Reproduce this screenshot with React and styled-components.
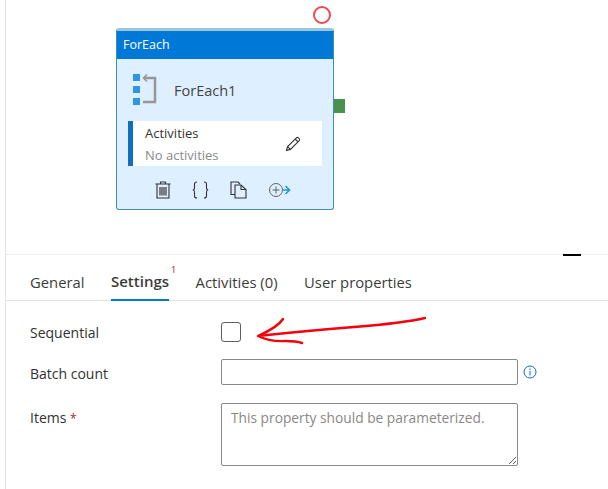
import React from 'react';
import styled, { createGlobalStyle } from 'styled-components';

const GlobalStyle = createGlobalStyle`
  html, body {
    margin: 0;
    padding: 0;
    background: #fff;
  }
  body {
    font-family: "Open Sans", "Noto Sans", "Liberation Sans", sans-serif;
    color: #323130;
  }
`;

const Page = styled.div`
  position: relative;
  width: 603px;
  height: 489px;
  overflow: hidden;
  box-sizing: border-box;
  margin-left: 5px;
  border-left: 1px solid #e3e3e3;
`;

const Canvas = styled.div`
  position: relative;
  height: 254px;
  border-bottom: 1px solid #ececec;
`;

const Node = styled.div`
  position: absolute;
  left: 110px;
  top: 28px;
  width: 218px;
  height: 182px;
  box-sizing: border-box;
  display: flex;
  flex-direction: column;
  background: #deefff;
  border: 1px solid #3f8fb5;
  border-top: 3px solid #9cc6d8;
  border-radius: 3px;
`;

const NodeHeader = styled.div`
  height: 28px;
  flex: none;
  background: #0078d7;
  color: #fff;
  font-size: 12.5px;
  line-height: 28px;
  padding-left: 6px;
`;

const NodeTitleRow = styled.div`
  display: flex;
  align-items: center;
  gap: 17px;
  height: 62px;
  padding-left: 16px;
  font-size: 14.5px;
  color: #444;
`;

const ActivityBox = styled.div`
  display: flex;
  align-items: center;
  justify-content: space-between;
  height: 45px;
  margin: 0 11px;
  padding: 0 21px 0 12px;
  background: #fff;
  border-left: 5px solid #106ebe;
`;

const ActivityText = styled.div`
  padding-top: 1px;
  font-size: 13px;
  line-height: 22px;
`;

const ActivityTitle = styled.div`
  color: #333;
`;

const ActivityHint = styled.div`
  color: #8a8a8a;
`;

const NodeActions = styled.div`
  display: flex;
  align-items: center;
  gap: 21px;
  padding: 15px 0 0 38px;
`;

const Port = styled.div`
  position: absolute;
  left: 328px;
  top: 99px;
  width: 11px;
  height: 14px;
  background: #4a9150;
`;

const Ring = styled.div`
  position: absolute;
  left: 307px;
  top: 6px;
  width: 14px;
  height: 14px;
  border: 2px solid #f0484e;
  border-radius: 50%;
`;

const Marker = styled.div`
  position: absolute;
  left: 557px;
  top: 254px;
  width: 18px;
  height: 2px;
  background: #000;
`;

const TabBar = styled.div`
  display: flex;
  gap: 26.5px;
  height: 46px;
  box-sizing: border-box;
  padding-left: 24px;
  border-bottom: 1px solid #e1e1e1;
`;

const Tab = styled.div`
  position: relative;
  display: flex;
  align-items: center;
  height: 46px;
  padding-top: 8px;
  box-sizing: border-box;
  font-size: ${p => (p.$active ? '15px' : '14.8px')};
  font-weight: ${p => (p.$active ? 600 : 400)};
  color: #3d3c3b;
  border-bottom: ${p => (p.$active ? '2px solid #0078d4' : 'none')};
`;

const TabBadge = styled.span`
  position: absolute;
  right: -7px;
  top: 8px;
  font-size: 9px;
  font-weight: 400;
  color: #a4262c;
`;

const Form = styled.div`
  display: flex;
  flex-direction: column;
  padding: 21px 0 0 24px;
`;

const Row = styled.div`
  display: flex;
  align-items: ${p => (p.$top ? 'flex-start' : 'center')};
  height: ${p => p.$height}px;
  margin-bottom: ${p => p.$gap}px;
`;

const Label = styled.div`
  width: 191px;
  flex: none;
  box-sizing: content-box;
  font-size: 14px;
  font-weight: 500;
  color: #323130;
  line-height: 20px;
  padding-top: ${p => p.$pad}px;
`;

const Required = styled.span`
  font-size: 12px;
  color: #a4262c;
`;

const Checkbox = styled.div`
  width: 18px;
  height: 18px;
  border: 1px solid #605e5c;
  border-radius: 3px;
`;

const TextBox = styled.div`
  width: 295px;
  height: 24px;
  border: 1px solid #8a8886;
  border-radius: 2px;
`;

const InfoIcon = styled.svg`
  margin-left: 5px;
`;

const TextArea = styled.textarea`
  display: block;
  width: 297px;
  height: 63px;
  box-sizing: border-box;
  margin: 0;
  padding: 4px 9px;
  border: 1px solid #8a8886;
  border-radius: 2px;
  outline: none;
  font-family: inherit;
  font-size: 13.75px;
  line-height: 20px;
  &::placeholder {
    color: #8a8886;
    opacity: 1;
  }
`;

const Scribble = styled.svg`
  position: absolute;
  left: 238px;
  top: 312px;
`;

const ForEachIcon = () => (
  <svg width="24" height="32" viewBox="0 0 24 32">
    <rect x="0" y="0" width="7" height="7" fill="#2f95e8" />
    <rect x="0" y="12" width="7" height="7" fill="#2f95e8" />
    <rect x="0" y="24" width="7" height="7" fill="#2f95e8" />
    <path d="M11 4 H22 V28 H10" fill="none" stroke="#979797" strokeWidth="2.5" />
    <path d="M14 0.5 L10.5 4 L14 7.5" fill="none" stroke="#979797" strokeWidth="1.6" />
  </svg>
);

const PencilIcon = () => (
  <svg width="16" height="16" viewBox="0 0 16 16" fill="none" stroke="#333" strokeWidth="1.1">
    <path d="M1.5 14.5 L2.6 10.6 L11.4 1.8 Q12.4 1 13.4 1.8 L14.2 2.6 Q15 3.6 14.2 4.6 L5.4 13.4 Z" />
    <path d="M10.2 3 L13 5.8 M2.6 10.6 L5.4 13.4" />
  </svg>
);

const TrashIcon = () => (
  <svg width="16" height="18" viewBox="0 0 16 18" fill="none" stroke="#333" strokeWidth="1.1">
    <path d="M0.5 3 H15.5 M5.5 3 V1 H10.5 V3" />
    <path d="M2 3 V17 H14 V3" />
    <path d="M5 6 V14.5 M7 6 V14.5 M9 6 V14.5 M11 6 V14.5" strokeWidth="1.2" />
  </svg>
);

const BracesIcon = () => (
  <svg width="17" height="18" viewBox="0 0 17 18" fill="none" stroke="#333" strokeWidth="1.1">
    <path d="M5 1 Q2.5 1 2.5 3 V7 Q2.5 9 0.8 9 Q2.5 9 2.5 11 V15 Q2.5 17 5 17" />
    <path d="M12 1 Q14.5 1 14.5 3 V7 Q14.5 9 16.2 9 Q14.5 9 14.5 11 V15 Q14.5 17 12 17" />
  </svg>
);

const CopyIcon = () => (
  <svg width="17" height="18" viewBox="0 0 17 18" fill="none" stroke="#333" strokeWidth="1.1">
    <path d="M5 13.5 H1 V1 H8 L10 3" />
    <path d="M5 4 H11 L16 8.5 V17 H5 Z" />
    <path d="M11 4 V8.5 H16" />
  </svg>
);

const AddOutputIcon = () => (
  <svg width="23" height="16" viewBox="0 0 23 16" fill="none">
    <circle cx="8" cy="8" r="6.5" stroke="#555" strokeWidth="0.9" />
    <path d="M4.5 8 H11.5 M8 4.5 V11.5" stroke="#555" strokeWidth="0.9" />
    <path d="M14 8 H21 M17.5 4 L21.5 8 L17.5 12" stroke="#1f9bd1" strokeWidth="1.6" />
  </svg>
);

const App = () => {
  return (
    <>
      <GlobalStyle />
      <Page>
        <Canvas>
          <Ring />
          <Node>
            <NodeHeader>ForEach</NodeHeader>
            <NodeTitleRow>
              <ForEachIcon />
              <span>ForEach1</span>
            </NodeTitleRow>
            <ActivityBox>
              <ActivityText>
                <ActivityTitle>Activities</ActivityTitle>
                <ActivityHint>No activities</ActivityHint>
              </ActivityText>
              <PencilIcon />
            </ActivityBox>
            <NodeActions>
              <TrashIcon />
              <BracesIcon />
              <CopyIcon />
              <AddOutputIcon />
            </NodeActions>
          </Node>
          <Port />
        </Canvas>
        <Marker />
        <TabBar>
          <Tab>General</Tab>
          <Tab $active>
            Settings
            <TabBadge>1</TabBadge>
          </Tab>
          <Tab>Activities (0)</Tab>
          <Tab>User properties</Tab>
        </TabBar>
        <Form>
          <Row $height={20} $gap={17}>
            <Label $pad={2}>Sequential</Label>
            <Checkbox />
          </Row>
          <Row $height={26} $gap={18}>
            <Label $pad={4}>Batch count</Label>
            <TextBox />
            <InfoIcon width="14" height="14" viewBox="0 0 14 14" fill="none">
              <circle cx="7" cy="7" r="6" stroke="#0a6cbd" />
              <path d="M7 6 V10.5 M7 3.5 V5" stroke="#0a6cbd" />
            </InfoIcon>
          </Row>
          <Row $top $height={63} $gap={0}>
            <Label $pad={5}>
              Items <Required>*</Required>
            </Label>
            <TextArea placeholder="This property should be parameterized." />
          </Row>
        </Form>
        <Scribble width="190" height="40" viewBox="0 0 190 40" fill="none">
          <path
            d="M39 7 Q34 15 14 24 Q60 19 110 15 Q160 11 181 6 M14 24 Q26 30 42 29 Q52 29 58 31"
            stroke="#f5000c"
            strokeWidth="2.4"
            strokeLinecap="round"
            strokeLinejoin="round"
          />
        </Scribble>
      </Page>
    </>
  );
};

export default App;
